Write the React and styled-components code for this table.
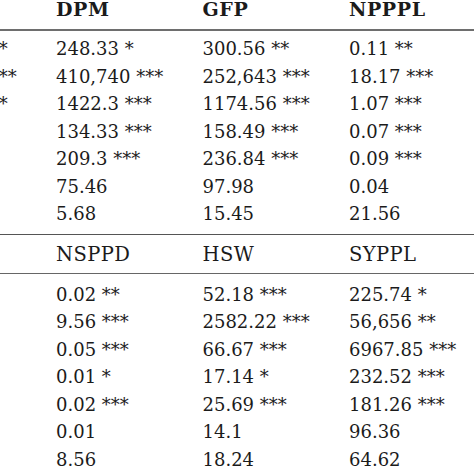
import React from 'react';
import styled, { createGlobalStyle } from 'styled-components';

const GlobalStyle = createGlobalStyle`
  html, body {
    margin: 0;
    padding: 0;
    background: #ffffff;
  }
`;

const Frame = styled.div`
  width: 474px;
  height: 474px;
  overflow: hidden;
  background: #ffffff;
  color: #1b1b1b;
  font-family: "DejaVu Serif", "Liberation Serif", serif;
  font-size: 18px;
`;

// the screenshot is a crop of a wider table, so the first column sits off the left edge
const Table = styled.div`
  margin-left: -90.5px;
  margin-top: -3px;
  width: max-content;
`;

const HeadRow = styled.div`
  display: grid;
  grid-template-columns: repeat(4, 146.5px);
  font-weight: ${p => (p.$bold ? 700 : 400)};
  font-size: ${p => (p.$bold ? '19px' : '19.5px')};
  letter-spacing: ${p => (p.$bold ? '0.6px' : '0.4px')};
  line-height: ${p => p.$lh};
  padding: ${p => p.$pad};
  border-top: ${p => p.$top || 'none'};
  border-bottom: ${p => p.$bottom};
`;

const Body = styled.div`
  padding: ${p => p.$pad};
`;

const Row = styled.div`
  display: grid;
  grid-template-columns: repeat(4, 146.5px);
  line-height: 27.5px;
`;

const Cell = styled.div`
  white-space: nowrap;
`;

const top = {
  head: ['DTF', 'DPM', 'GFP', 'NPPPL'],
  rows: [
    ['8126.31 **', '248.33 *', '300.56 **', '0.11 **'],
    ['154,328 ***', '410,740 ***', '252,643 ***', '18.17 ***'],
    ['4852.16 **', '1422.3 ***', '1174.56 ***', '1.07 ***'],
    ['32.15 ***', '134.33 ***', '158.49 ***', '0.07 ***'],
    ['41.82 ***', '209.3 ***', '236.84 ***', '0.09 ***'],
    ['12.04', '75.46', '97.98', '0.04'],
    ['3.17', '5.68', '15.45', '21.56'],
  ],
};

const bottom = {
  head: ['PH', 'NSPPD', 'HSW', 'SYPPL'],
  rows: [
    ['41.5 **', '0.02 **', '52.18 ***', '225.74 *'],
    ['86.3 ***', '9.56 ***', '2582.22 ***', '56,656 **'],
    ['12.7 ***', '0.05 ***', '66.67 ***', '6967.85 ***'],
    ['8.42 *', '0.01 *', '17.14 *', '232.52 ***'],
    ['10.6 ***', '0.02 ***', '25.69 ***', '181.26 ***'],
    ['2.91', '0.01', '14.1', '96.36'],
    ['6.35', '8.56', '18.24', '64.62'],
  ],
};

const Rows = ({ rows }) =>
  rows.map((r, i) => (
    <Row key={i}>
      {r.map((c, j) => (
        <Cell key={j}>{c}</Cell>
      ))}
    </Row>
  ));

export default function App() {
  return (
    <Frame>
      <GlobalStyle />
      <Table>
        <HeadRow $bold $lh="24px" $pad="0 0 8px" $bottom="2px solid #6e6e6e">
          {top.head.map(h => (
            <Cell key={h}>{h}</Cell>
          ))}
        </HeadRow>
        <Body $pad="4px 0 6.5px">
          <Rows rows={top.rows} />
        </Body>
        <HeadRow
          $lh="27.5px"
          $pad="6.4px 0 4.6px"
          $top="1.5px solid #555555"
          $bottom="1.5px solid #666666"
        >
          {bottom.head.map(h => (
            <Cell key={h}>{h}</Cell>
          ))}
        </HeadRow>
        <Body $pad="6.1px 0 0">
          <Rows rows={bottom.rows} />
        </Body>
      </Table>
    </Frame>
  );
}
